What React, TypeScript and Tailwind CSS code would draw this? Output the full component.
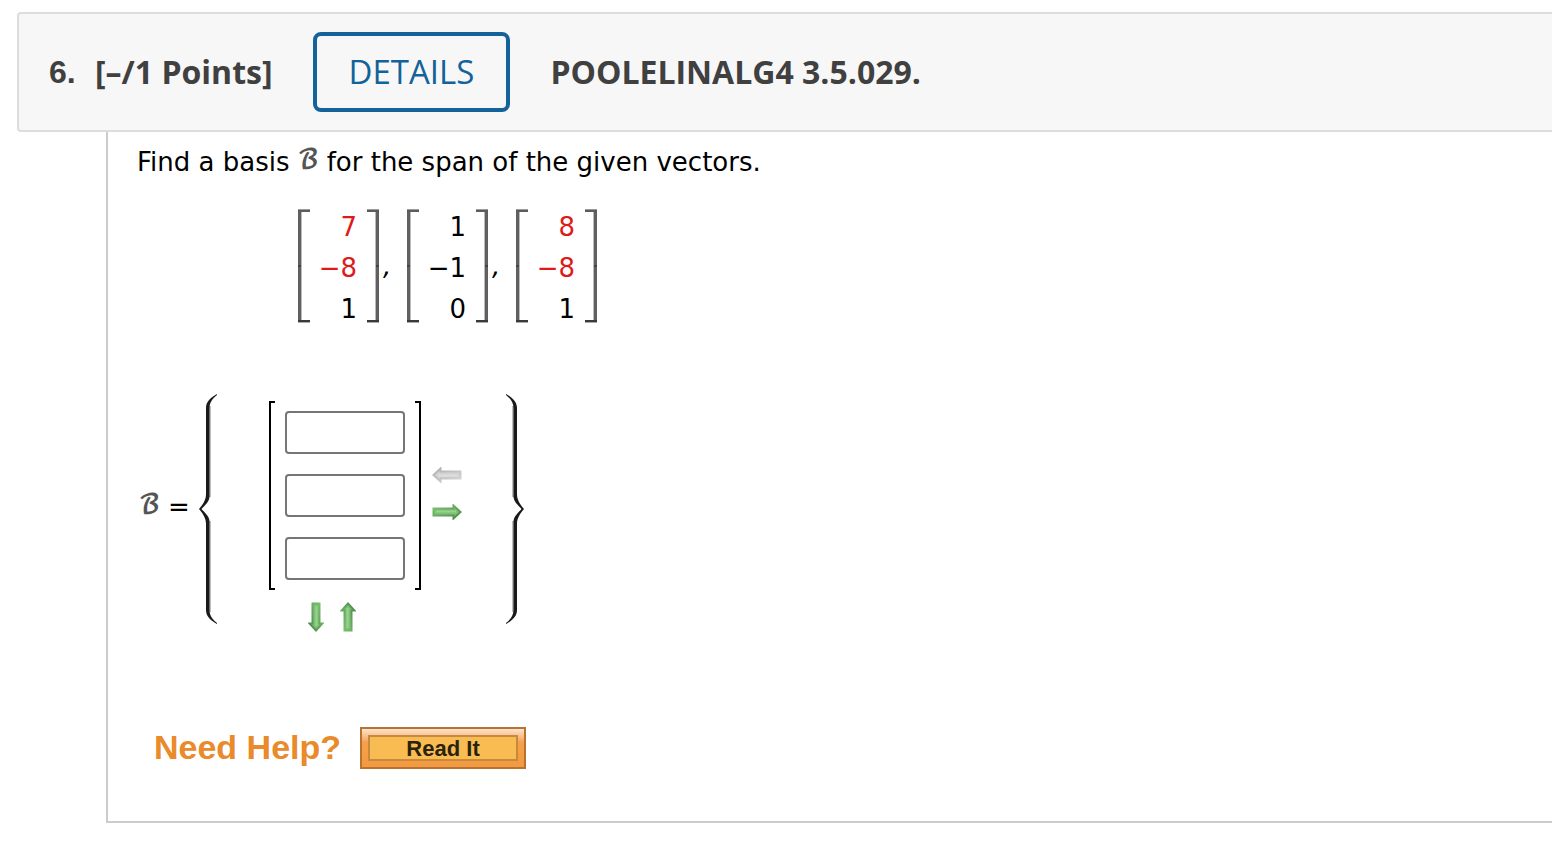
import { useId, useState } from 'react';

type Entry = { value: string; random?: boolean };

const VECTORS: Entry[][] = [
  [{ value: '7', random: true }, { value: '−8', random: true }, { value: '1' }],
  [{ value: '1' }, { value: '−1' }, { value: '0' }],
  [{ value: '8', random: true }, { value: '−8', random: true }, { value: '1' }],
];

function ScriptB() {
  return (
    <span className="align-[3px] font-['DejaVu_Math_TeX_Gyre','DejaVu_Serif','DejaVu_Sans',serif] text-[26px] leading-none font-bold text-[#555]">
      ℬ
    </span>
  );
}

function SquareBracket({ flip = false }: { flip?: boolean }) {
  return (
    <svg
      width="12"
      height="114"
      viewBox="0 0 12 114"
      aria-hidden="true"
      className={flip ? '-scale-x-100' : ''}
    >
      <rect x="0" y="0" width="3" height="114" fill="#606060" />
      <rect x="3" y="3" width="1" height="108" fill="#bbbbbb" />
      <rect x="0" y="0" width="12" height="1" fill="#9a9a9a" />
      <rect x="0" y="1" width="12" height="2" fill="#5c5c5c" />
      <rect x="0" y="111" width="12" height="2" fill="#3a3a3a" />
      <rect x="0" y="113" width="12" height="1" fill="#aaaaaa" />
      <rect x="0" y="56" width="3" height="2" fill="#444444" />
    </svg>
  );
}

function Brace({ flip = false }: { flip?: boolean }) {
  return (
    <svg
      width="18"
      height="230"
      viewBox="0 0 18 230"
      aria-hidden="true"
      className={flip ? 'shrink-0 -scale-x-100' : 'shrink-0'}
    >
      <path d="M11 12V103M11 127V218" fill="none" stroke="#bdbdbd" strokeWidth="2" />
      <path
        d="M18 0C11 4 7 8 7 14V100C7 106 4 110 0 115C4 120 7 124 7 130V216C7 222 11 226 18 230V229C13 225 10.500 221 10.500 216V127C10 122 6 119 2.500 115C6 111 10 108 10.500 103V14C10.500 9 13 5 18 1Z"
        fill="#1a1a1a"
      />
    </svg>
  );
}

const ROTATION = {
  right: '',
  left: 'rotate(180 15 15)',
  down: 'rotate(90 15 15)',
  up: 'rotate(-90 15 15)',
};

type ArrowProps = {
  direction: keyof typeof ROTATION;
  label: string;
  disabled?: boolean;
  onClick?: () => void;
};

function ArrowButton({ direction, label, disabled, onClick }: ArrowProps) {
  const id = useId();
  const vertical = direction === 'up' || direction === 'down';

  return (
    <button type="button" aria-label={label} disabled={disabled} onClick={onClick} className="block">
      <svg
        width={vertical ? 16 : 30}
        height={vertical ? 30 : 16}
        viewBox={vertical ? '7 0 16 30' : '0 7 30 16'}
        className="block"
      >
        <defs>
          <linearGradient id={id} x1="0" y1="0" x2="1" y2="1">
            <stop offset="0" stopColor={disabled ? '#d6d6d6' : '#7cc56f'} />
            <stop offset="1" stopColor={disabled ? '#b0b0b0' : '#4a8a4a'} />
          </linearGradient>
        </defs>
        <g transform={ROTATION[direction]}>
          <path
            d="M1.500 11.500H21.500V8.500L28.500 15L21.500 21.500V18.500H1.500Z"
            fill={disabled ? '#d2d2d2' : '#7fc077'}
            stroke={`url(#${id})`}
            strokeWidth="2"
          />
          <path d="M4 14.500H24" stroke={disabled ? '#dedede' : '#9bd091'} strokeWidth="2" />
        </g>
      </svg>
    </button>
  );
}

export default function App() {
  const [values, setValues] = useState(['', '', '']);

  const updateValue = (index: number, value: string) => {
    setValues(values.map((v, i) => (i === index ? value : v)));
  };

  return (
    <main className="min-h-screen overflow-hidden bg-white pt-3 pl-[17px] font-['DejaVu_Sans',sans-serif] text-[26px] leading-8 text-black">
      {/* Question header */}
      <header className="flex items-center rounded-l border-2 border-r-0 border-[#ddd] bg-[#f7f7f7] py-[18px] pl-[30px] font-['Open_Sans',sans-serif] text-[32px] font-bold text-[#404040]">
        <span className="w-[46px] font-['Liberation_Sans',sans-serif]">6.</span>
        <span className="mr-10">[–/1 Points]</span>
        <button
          type="button"
          className="mr-10 h-20 rounded-lg border-4 border-[#14629a] px-8 text-[33px] font-medium text-[#14629a]"
        >
          DETAILS
        </button>
        <h1>POOLELINALG4 3.5.029.</h1>
      </header>

      {/* Question body */}
      <section className="ml-[89px] border-b-2 border-l-2 border-[#ccc] pt-[14px] pb-[52px] pl-[29px]">
        <p>
          Find a basis <ScriptB /> for the span of the given vectors.
        </p>

        <div className="mt-[29px] ml-[161px] flex items-center">
          {VECTORS.map((vector, i) => (
            <div key={i} className="flex items-center">
              <SquareBracket />
              <div className="flex w-[57px] flex-col gap-[9px] pt-1 pr-[10px] text-right">
                {vector.map((entry, j) => (
                  <span key={j} className={entry.random ? 'text-[#dd1c1a]' : ''}>
                    {entry.value}
                  </span>
                ))}
              </div>
              <SquareBracket flip />
              {i < VECTORS.length - 1 && <span className="w-7 pl-1 italic">,</span>}
            </div>
          ))}
        </div>

        {/* Answer set */}
        <div className="mt-[69px] ml-[2px] flex items-start">
          <div className="flex items-center">
            <div className="w-[60px] pb-1 whitespace-nowrap">
              <ScriptB /> =
            </div>
            <Brace />
          </div>

          <div className="ml-[52px] pt-[7px]">
            <div className="flex items-center">
              <div className="h-[189px] w-[6px] border-2 border-r-0 border-black" />
              <div className="flex flex-col gap-5 px-[10px]">
                {values.map((value, i) => (
                  <input
                    key={i}
                    type="text"
                    aria-label={`Row ${i + 1}`}
                    value={value}
                    onChange={(e) => updateValue(i, e.target.value)}
                    className="h-[43px] w-[120px] rounded border-2 border-[#767676] bg-white px-1"
                  />
                ))}
              </div>
              <div className="h-[189px] w-[6px] border-2 border-l-0 border-black" />
              <div className="ml-[11px] flex flex-col gap-[21px] pb-1">
                <ArrowButton direction="left" label="Remove vector" disabled />
                <ArrowButton direction="right" label="Add vector" />
              </div>
            </div>
            <div className="mt-3 ml-[39px] flex gap-4">
              <ArrowButton
                direction="down"
                label="Add row"
                onClick={() => setValues([...values, ''])}
              />
              <ArrowButton
                direction="up"
                label="Remove row"
                onClick={() => setValues(values.length > 1 ? values.slice(0, -1) : values)}
              />
            </div>
          </div>

          <div className="ml-11">
            <Brace flip />
          </div>
        </div>

        {/* Help */}
        <div className="mt-[95px] ml-[17px] flex items-center gap-[19px] font-['Liberation_Sans',sans-serif] font-bold">
          <span className="pb-[2px] text-[34px] text-[#e98a2b]">Need Help?</span>
          <button
            type="button"
            className="h-[42px] w-[166px] border-2 border-[#b87333] bg-linear-to-b from-[#fbe3cf] via-[#f5a04a] via-35% to-[#f39a40] p-[6px] text-[22px] text-[#2b220c]"
          >
            <span className="flex h-full items-center justify-center border-2 border-[#c68a3e] bg-[#f9bc52] pt-[2px]">
              Read It
            </span>
          </button>
        </div>
      </section>
    </main>
  );
}
